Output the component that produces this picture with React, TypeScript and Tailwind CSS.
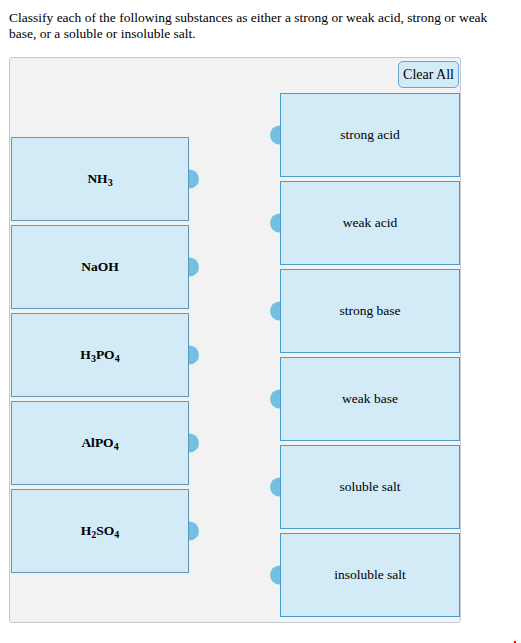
import React from "react";

const Sub = ({ n }: { n: string }) => <sub className="text-[10px]">{n}</sub>;

const left: React.ReactNode[] = [
  <>NH<Sub n="3" /></>,
  <>NaOH</>,
  <>H<Sub n="3" />PO<Sub n="4" /></>,
  <>AlPO<Sub n="4" /></>,
  <>H<Sub n="2" />SO<Sub n="4" /></>,
];

const right = ["strong acid", "weak acid", "strong base", "weak base", "soluble salt", "insoluble salt"];

export default function App() {
  return (
    <div className="relative min-h-[643px] bg-white text-black font-[Liberation_Serif] text-[13.5px] leading-[16px]">
      <div className="pl-[9px] pt-[10px] w-[495px]">
        <p>
          Classify each of the following substances as either a strong or weak acid, strong or weak base, or a soluble or
          insoluble salt.
        </p>
      </div>

      {/* drag/drop panel */}
      <div className="ml-[9px] mt-[15px] w-[452px] h-[566px] rounded-[3px] border border-[#c3c9d1] bg-[#f2f2f2] pl-[1px] pt-[3px]">
        <div className="flex justify-end pr-[1px]">
          <button className="h-[27px] px-[4px] rounded-[5px] border border-[#6aa6cc] bg-[#d3eaf7] text-[14px] leading-none text-black">
            Clear All
          </button>
        </div>

        <div className="flex mt-[5px]">
          {/* substances */}
          <div className="flex flex-col gap-[4px] mt-[44px]">
            {left.map((item, i) => (
              <div
                key={i}
                className="relative w-[178px] h-[84px] border border-[#5d97bc] bg-[#d3eaf7] flex items-center justify-center font-bold"
              >
                <span>{item}</span>
                <span className="absolute right-[-11px] top-1/2 -translate-y-1/2 w-[10px] h-[19px] rounded-r-full bg-[#73c0e2]" />
              </div>
            ))}
          </div>

          {/* categories */}
          <div className="ml-auto flex flex-col gap-[4px]">
            {right.map((label) => (
              <div
                key={label}
                className="relative w-[180px] h-[84px] border border-[#4b9bcb] bg-[#d3eaf7] flex items-center justify-center"
              >
                <span>{label}</span>
                <span className="absolute left-[-11px] top-1/2 -translate-y-1/2 w-[10px] h-[19px] rounded-l-full bg-[#73c0e2]" />
              </div>
            ))}
          </div>
        </div>
      </div>

      <span className="absolute left-[514px] top-[641px] w-[2px] h-[2px] bg-[#ff0000]" />
    </div>
  );
}
